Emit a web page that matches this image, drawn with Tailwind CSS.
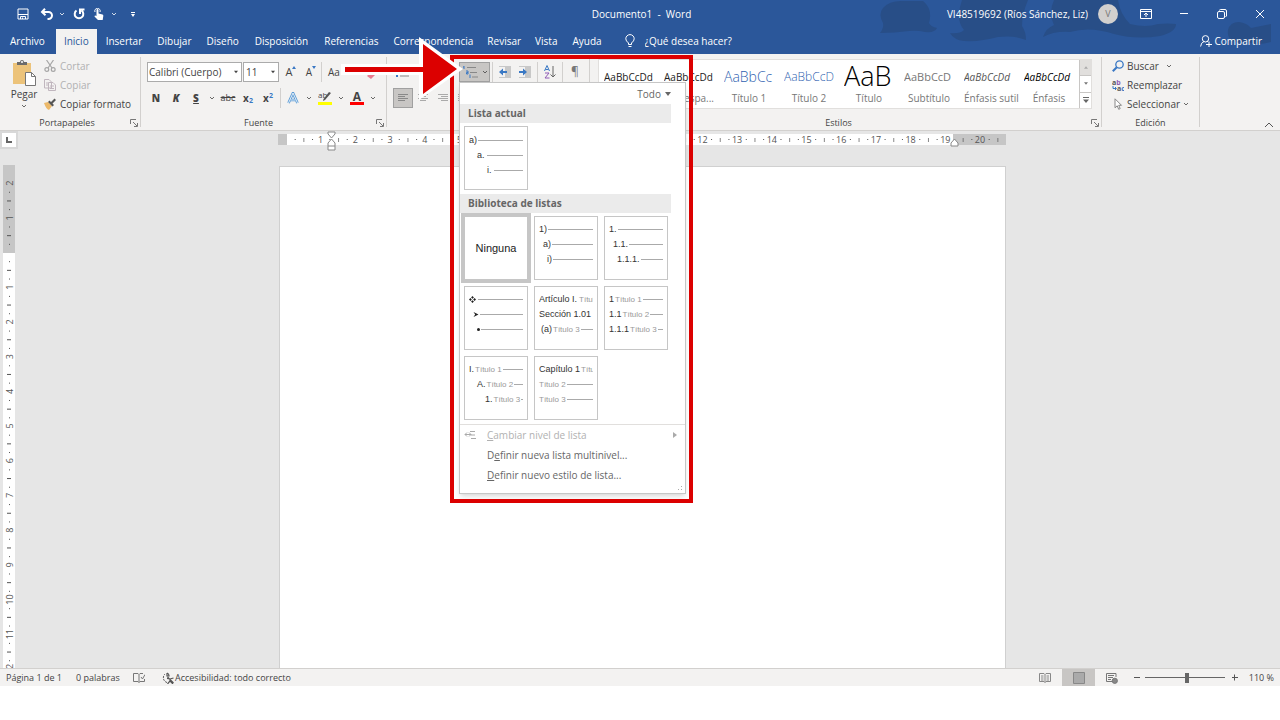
<!DOCTYPE html>
<html lang="es">
<head>
    <meta charset="UTF-8">
    <meta name="viewport" content="width=device-width, initial-scale=1.0">
    <title>Documento1 - Word</title>
    <script src="https://cdn.jsdelivr.net/npm/@tailwindcss/browser@4"></script>
</head>
<body class="bg-white font-['Open_Sans','Noto_Sans',sans-serif] text-[10px] leading-4 text-[#444444]">

<!-- Shared icons -->
<svg class="hidden" xmlns="http://www.w3.org/2000/svg">
    <symbol id="chev" viewBox="0 0 6 4"><path d="M1 1l2 2 2-2" fill="none" stroke="currentColor" stroke-width=".8"/></symbol>
    <symbol id="tri" viewBox="0 0 6 4"><path d="M0 0h6L3 4z" fill="currentColor"/></symbol>
    <symbol id="launcher" viewBox="0 0 8 8"><path d="M.5 5V.5H6M3 3l4 4M7.500 4v3.500H4" fill="none" stroke="#777"/></symbol>
</svg>

<div class="relative min-h-screen flex flex-col overflow-hidden">

    <!-- Title bar and tabs -->
    <header class="relative bg-[#2b579a] text-white">
        <svg class="absolute right-0 top-0 w-[410px] h-[54px]" viewBox="0 0 410 54" fill="#284e87">
            <path d="M10 33q4-5 3-10-5-9 0-15 6-7 18-7h22q10 8 6 22 2 4 8 5-2 5-12 4-8-2-16-1-14 2-29 2z"/>
            <path d="M92 0h66q-6 14-6 26 4 6 4 14-12-5-28-3-18 5-34 4-10-1-14-8 10 1 14-3-5-6-5-14 0-8 3-16z"/>
            <path d="M184 0h64q2 14 12 24 16 4 28 0 10-1 18 0 0 8-16 12-24 4-46-2-24-8-44-2-16-1-27 5 3-9 11-12-6-12 0-25z"/>
            <path d="M358 30q2-8 11-8 8 1 12 6 10-2 20-4v18q-14 4-24 0-10 2-16-2-4-4-3-10z"/>
        </svg>
        <div class="relative h-[27px] flex items-center pl-[15px] pr-3">
            <div class="flex-1 flex items-center">
                <button aria-label="Guardar" class="w-4">
                    <svg class="w-3 h-3 mx-auto" viewBox="0 0 12 12" fill="none" stroke="#fff"><path d="M1 1h10v10H1zM1 6.500h10M3.500 11V8.500h5V11M5.500 9.500V11"/></svg>
                </button>
                <button aria-label="Deshacer" class="ml-2 w-4">
                    <svg class="w-3.5 h-3 mx-auto" viewBox="0 0 14 12" fill="none" stroke="#fff" stroke-width="2"><path d="M5 .8L2 4l3.500 3.200M2 4h6.500a3.500 3.500 0 0 1 0 7H7.500"/></svg>
                </button>
                <svg class="w-1.5 h-1 ml-1"><use href="#chev"/></svg>
                <button aria-label="Rehacer" class="ml-1.5 w-4">
                    <svg class="w-3 h-3 mx-auto" viewBox="0 0 12 12" fill="none" stroke="#fff" stroke-width="2"><path d="M3.500 2.500a4.300 4.300 0 1 0 5 0M7 6V1.500h4.500"/></svg>
                </button>
                <button aria-label="Modo mouse/toque" class="ml-1 w-4">
                    <svg class="w-3 h-3 mx-auto" viewBox="0 0 12 12" fill="#fff"><path d="M3.500 6V2a1 1 0 0 1 2 0v3.500l4 1q1 .3.800 1.500l-.6 4H5L1.500 8.500q0-1.500 2-.5z"/><path d="M2 4a2.700 2.700 0 1 1 5 0" fill="none" stroke="#fff"/></svg>
                </button>
                <svg class="w-1.5 h-1 ml-1"><use href="#chev"/></svg>
                <button aria-label="Personalizar" class="ml-3 w-2">
                    <svg class="w-1 h-1.5 mx-auto" viewBox="0 0 4 6" fill="#fff"><path d="M0 1h4v1H0zM0 3h4L2 6z"/></svg>
                </button>
            </div>
            <div class="whitespace-pre">Documento1  -  Word</div>
            <div class="flex-1 flex items-center justify-end">
                <span>VI48519692 (Ríos Sánchez, Liz)</span>
                <span class="ml-2.5 size-5 rounded-full bg-[#d2d0ce] text-[#777] flex items-center justify-center text-[9px]">V</span>
                <button aria-label="Opciones de presentación" class="ml-[18px] w-5">
                    <svg class="w-3 h-2.5 mx-auto" viewBox="0 0 12 10" fill="none" stroke="#fff"><path d="M.5.500h11v9H.5zM.5 2.500h11M6 8V4M4 6l2-2 2 2"/></svg>
                </button>
                <button aria-label="Minimizar" class="ml-5 w-4"><svg class="w-2.5 h-2.5 mx-auto" viewBox="0 0 10 10" stroke="#fff"><path d="M1 4.500h8"/></svg></button>
                <button aria-label="Restaurar" class="ml-5 w-5"><svg class="w-2.5 h-2.5 mx-auto" viewBox="0 0 10 10" fill="none" stroke="#fff"><rect x=".5" y="2.500" width="7" height="7" rx="1.500"/><path d="M2.500 1.500q0-1 1-1H8q1.500 0 1.500 1.500v5q0 .5-1 .5"/></svg></button>
                <button aria-label="Cerrar" class="ml-5 w-4"><svg class="w-2.5 h-2.5 mx-auto" viewBox="0 0 10 10" stroke="#fff"><path d="M1 1l8 8M9 1L1 9"/></svg></button>
            </div>
        </div>
        <nav class="relative h-[27px] flex items-center pl-0.5">
            <a href="#" class="pl-2 pr-[11px]">Archivo</a>
            <a href="#" class="mt-0.5 px-2 h-[25px] leading-6 bg-[#f3f2f1] text-[#2b579a]">Inicio</a>
            <a href="#" class="pl-[9px] pr-2">Insertar</a>
            <a href="#" class="px-[7px]">Dibujar</a>
            <a href="#" class="px-2">Diseño</a>
            <a href="#" class="px-2">Disposición</a>
            <a href="#" class="px-2">Referencias</a>
            <a href="#" class="px-[7px]">Correspondencia</a>
            <a href="#" class="px-[7px]">Revisar</a>
            <a href="#" class="px-[7px]">Vista</a>
            <a href="#" class="pl-2 pr-[9px]">Ayuda</a>
            <label class="ml-3.5 flex items-center">
                <svg class="w-2.5 h-3.5 mr-2.5" viewBox="0 0 10 14" fill="none" stroke="#fff"><path d="M3.500 10.500V9Q.8 7 .8 4.800a4.200 4.200 0 0 1 8.400 0Q9.200 7 6.500 9v1.500zM3.500 12.500h3"/></svg>
                <input type="text" aria-label="Buscar comandos" placeholder="¿Qué desea hacer?" class="w-28 bg-transparent placeholder:text-white outline-none">
            </label>
            <button class="ml-auto mr-[18px] flex items-center gap-0.5">
                <svg class="w-3 h-3" viewBox="0 0 12 12" fill="none" stroke="#fff"><circle cx="5.500" cy="3.800" r="3.200"/><path d="M.6 11.500q.4-4 3.400-5M8 6.500l-1-.3M6 9.500h6M9 6.500v5.500"/></svg>
                Compartir
            </button>
        </nav>
    </header>

    <!-- Ribbon -->
    <section class="h-[77px] bg-[#f3f2f1] border-b border-[#d2d0ce] flex">

        <!-- Portapapeles -->
        <div class="w-[140px] flex flex-col">
            <div class="flex-1 flex pt-0.5">
                <button class="w-10 ml-1 flex flex-col items-center pt-1 leading-3">
                    <svg class="w-6 h-[26px] mb-0.5" viewBox="0 0 24 26"><rect x="1" y="3" width="18" height="21" fill="#ecc37a"/><path d="M5 5V2h3q0-2 2-2t2 2h3v3z" fill="#6b6b6b"/><circle cx="10" cy="2" r="1" fill="#fff"/><path d="M13.500 12.500h6l4 4v9h-10z" fill="#fff" stroke="#777"/><path d="M19.500 12.500v4h4" fill="none" stroke="#777"/></svg>
                    Pegar
                    <svg class="w-1.5 h-1 mt-1"><use href="#chev"/></svg>
                </button>
                <div class="flex flex-col">
                    <button disabled class="h-[19px] flex items-center gap-1 text-[#b1b1b1]">
                        <svg class="w-3 h-3" viewBox="0 0 12 12" fill="none" stroke="#a6a6a6" stroke-width="1.200"><path d="M2.500 0L8 8M9.500 0L4 8"/><circle cx="2.800" cy="9.500" r="1.900"/><circle cx="9.200" cy="9.500" r="1.900"/></svg>Cortar
                    </button>
                    <button disabled class="h-[19px] flex items-center gap-1 text-[#b1b1b1]">
                        <svg class="w-3 h-3" viewBox="0 0 12 12" fill="#f3f2f1" stroke="#c0b6be"><path d="M.5.500H5L7.500 3v6h-7zM4.500 3.500H9L11.500 6v5.500h-7zM6 7h4M6 9.500h4M2 4h2M2 6h2"/></svg>Copiar
                    </button>
                    <button class="h-[19px] flex items-center gap-1">
                        <svg class="w-3 h-3" viewBox="0 0 12 12"><path d="M0 5l4-1 4 4-3 4q-3-1-5-7z" fill="#ecb96a"/><path d="M4 4l1.500-1.500L7 4l3.500-3.500L12 2 8.500 5.500 10 7 8.500 8.500z" fill="#555"/></svg>Copiar formato
                    </button>
                </div>
            </div>
            <div class="h-3 flex items-center text-[9px] mb-px"><span class="flex-1 pl-1 text-center">Portapapeles</span><button aria-label="Opciones del portapapeles" class="mr-0.5"><svg class="size-2"><use href="#launcher"/></svg></button></div>
        </div>
        <div class="w-px my-[3px] bg-[#d2d0ce]"></div>

        <!-- Fuente -->
        <div class="w-[245px] flex flex-col">
            <div class="flex items-center pl-[6px] pt-2 h-7">
                <div class="relative">
                    <select aria-label="Fuente" class="block appearance-none w-[95px] h-5 bg-white border border-[#ababab] pl-px"><option>Calibri (Cuerpo)</option></select>
                    <svg class="absolute right-1 top-2 w-1 h-1 pointer-events-none"><use href="#tri"/></svg>
                </div>
                <div class="relative ml-px">
                    <select aria-label="Tamaño de fuente" class="block appearance-none w-9 h-5 bg-white border border-[#ababab] pl-0.5"><option>11</option></select>
                    <svg class="absolute right-1 top-2 w-1 h-1 pointer-events-none"><use href="#tri"/></svg>
                </div>
                <button aria-label="Aumentar tamaño" class="ml-0.5 w-5 flex justify-center"><span class="text-[11px]">A</span><svg class="w-1 h-1 mt-px" viewBox="0 0 4 4"><path d="M0 4h4L2 1z" fill="#3a78c4"/></svg></button>
                <button aria-label="Reducir tamaño" class="w-5 flex justify-center"><span>A</span><svg class="w-1 h-1 mt-px" viewBox="0 0 4 4"><path d="M0 1h4L2 4z" fill="#3a78c4"/></svg></button>
                <div class="w-px h-5 bg-[#d2d0ce]"></div>
                <button class="w-6">Aa</button>
                <button aria-label="Borrar formato" class="ml-4 w-4"><svg class="size-4" viewBox="0 0 16 16"><path d="M2 10L7 1l4 8" fill="none" stroke="#555"/><path d="M5 12l4-4 4 3-4 4z" fill="#e87b90"/></svg></button>
            </div>
            <div class="flex-1 flex items-center pl-[5px] pb-1">
                <button class="w-5 font-extrabold">N</button>
                <button class="w-5 font-extrabold italic">K</button>
                <button class="w-5 font-extrabold underline">S</button>
                <button aria-label="Estilo de subrayado" class="w-3"><svg class="w-1.5 h-1 mx-auto"><use href="#chev"/></svg></button>
                <button class="w-5 line-through text-[9px]">abc</button>
                <button class="w-5 font-bold">x<sub class="text-[7px] text-[#3a78c4]">2</sub></button>
                <button class="w-5 font-bold">x<sup class="text-[7px] text-[#3a78c4]">2</sup></button>
                <div class="w-px h-5 bg-[#d2d0ce] mx-0.5"></div>
                <button aria-label="Efectos de texto" class="w-5"><svg class="size-3 mx-auto" viewBox="0 0 12 12" fill="none"><path d="M1.500 11L6 1l4.500 10M3.500 8h5" stroke="#5b9bd5" stroke-width="2.600"/><path d="M1.500 11L6 1l4.500 10M3.500 8h5" stroke="#fff" stroke-width=".8"/></svg></button>
                <button aria-label="Más efectos" class="w-3"><svg class="w-1.5 h-1 mx-auto"><use href="#chev"/></svg></button>
                <button aria-label="Color de resaltado" class="w-5"><svg class="w-3.5 h-3.5 mx-auto" viewBox="0 0 14 14"><text x="0" y="7" font-size="8" fill="#444">ab</text><path d="M13 2L7 9l-2 1 .5-2L11 1z" fill="#555"/><path d="M0 11h14v3H0z" fill="#ffff00"/></svg></button>
                <button aria-label="Más resaltados" class="w-3"><svg class="w-1.5 h-1 mx-auto"><use href="#chev"/></svg></button>
                <button aria-label="Color de fuente" class="w-5"><span class="block w-3.5 mx-auto h-3.5 border-b-[3px] border-[#ff0000] font-bold text-xs leading-[11px]">A</span></button>
                <button aria-label="Más colores" class="w-3"><svg class="w-1.5 h-1 mx-auto"><use href="#chev"/></svg></button>
            </div>
            <div class="h-3 flex items-center text-[9px] mb-px"><span class="flex-1 text-center">Fuente</span><button aria-label="Opciones de fuente" class="mr-0.5"><svg class="size-2"><use href="#launcher"/></svg></button></div>
        </div>
        <div class="w-px my-[3px] bg-[#d2d0ce]"></div>

        <!-- Párrafo -->
        <div class="w-[202px] flex flex-col">
            <div class="flex items-center pt-2 h-7 pl-1.5">
                <button aria-label="Viñetas" class="w-8"><svg class="w-4 h-3" viewBox="0 0 16 12"><path d="M3 1h2v2H3zM3 5h2v2H3zM3 9h2v2H3z" fill="#3a78c4"/><path d="M7 2h9M7 6h9M7 10h9" stroke="#888"/></svg></button>
                <button aria-label="Numeración" class="w-[34px]"></button>
                <div class="relative">
                    <button aria-label="Lista multinivel" aria-expanded="true" class="w-[31px] h-5 bg-[#c8c6c4] border border-[#a0a0a0] flex items-center justify-center gap-1">
                        <svg class="w-4 h-3" viewBox="0 0 16 12"><path d="M2 0v3M1 1h1M4 5h2v3H4.500V6.500H6M8 8.500V12" fill="none" stroke="#3a78c4"/><path d="M5 1.500h9M8 6.500h7M10 11h6" stroke="#888"/></svg>
                        <svg class="w-1.5 h-1"><use href="#chev"/></svg>
                    </button>

                    <!-- Multilevel list menu -->
                    <div class="absolute z-10 left-0 top-5 w-[227px] bg-white border border-[#c6c6c6] shadow-md text-[#666]">
                        <button class="flex items-center gap-1 ml-auto mr-3.5 h-[21px]">Todo <svg class="w-1.5 h-1"><use href="#tri"/></svg></button>
                        <h3 class="w-[211px] h-[19px] leading-[19px] bg-[#ebebeb] pl-2 font-bold">Lista actual</h3>
                        <div class="p-1 pt-[3px] font-['Liberation_Sans',Arial,sans-serif] text-[9px] text-[#333]">
                            <button class="block size-16 border border-[#c6c6c6] text-left leading-[15px] px-1 pb-1.5">
                                <span class="flex items-center gap-px">a)<i class="flex-1 h-px bg-[#aaa]"></i></span>
                                <span class="flex items-center gap-0.5 pl-2">a.<i class="flex-1 h-px bg-[#aaa]"></i></span>
                                <span class="flex items-center gap-0.5 pl-[18px]">i.<i class="flex-1 h-px bg-[#aaa]"></i></span>
                            </button>
                        </div>
                        <h3 class="w-[211px] h-[19px] leading-[19px] bg-[#ebebeb] pl-2 font-bold">Biblioteca de listas</h3>
                        <div class="p-1 pt-[3px] grid grid-cols-[64px_64px_64px] gap-1.5 font-['Liberation_Sans',Arial,sans-serif] text-[9px] text-[#333]">
                            <button class="size-16 border border-[#c6c6c6] outline-3 outline-[#c6c6c6] text-[11px] text-[#222]">Ninguna</button>
                            <button class="size-16 border border-[#c6c6c6] text-left leading-[15px] px-1 pb-2">
                                <span class="flex items-center gap-px">1)<i class="flex-1 h-px bg-[#aaa]"></i></span>
                                <span class="flex items-center gap-px pl-1">a)<i class="flex-1 h-px bg-[#aaa]"></i></span>
                                <span class="flex items-center gap-px pl-2">i)<i class="flex-1 h-px bg-[#aaa]"></i></span>
                            </button>
                            <button class="size-16 border border-[#c6c6c6] text-left leading-[15px] px-1 pb-2">
                                <span class="flex items-center gap-px">1.<i class="flex-1 h-px bg-[#aaa]"></i></span>
                                <span class="flex items-center gap-px pl-1">1.1.<i class="flex-1 h-px bg-[#aaa]"></i></span>
                                <span class="flex items-center gap-px pl-2">1.1.1.<i class="flex-1 h-px bg-[#aaa]"></i></span>
                            </button>
                            <button class="size-16 border border-[#c6c6c6] text-left leading-[15px] px-1 pb-2">
                                <span class="flex items-center gap-0.5 h-[15px]"><svg class="size-[7px]" viewBox="0 0 8 8" fill="#222"><path d="M4 0l1.600 1.600L4 3.200 2.400 1.600zM4 4.800l1.600 1.600L4 8 2.400 6.400zM1.600 2.400L3.200 4 1.600 5.600 0 4zM6.400 2.400L8 4 6.400 5.600 4.800 4z"/></svg><i class="flex-1 h-px bg-[#aaa]"></i></span>
                                <span class="flex items-center gap-px h-[15px] pl-1"><svg class="w-1.5 h-[5px]" viewBox="0 0 6 6" fill="#222"><path d="M0 0l6 3-6 3 2-3z"/></svg><i class="flex-1 h-px bg-[#aaa]"></i></span>
                                <span class="flex items-center gap-px h-[15px] pl-2"><b class="size-[3px] rounded-full bg-[#222]"></b><i class="flex-1 h-px bg-[#aaa]"></i></span>
                            </button>
                            <button class="size-16 border border-[#c6c6c6] text-left leading-[15px] px-1 pb-2 whitespace-nowrap">
                                <span class="flex items-center gap-0.5 overflow-hidden">Artículo I. <em class="not-italic text-[8px] text-[#999]">Título 1</em></span>
                                <span class="flex items-center gap-0.5 overflow-hidden">Sección 1.01 <em class="not-italic text-[8px] text-[#999]">Título 2</em></span>
                                <span class="flex items-center gap-px pl-0.5">(a)<em class="not-italic text-[8px] text-[#999]">Título 3</em><i class="flex-1 h-px bg-[#aaa]"></i></span>
                            </button>
                            <button class="size-16 border border-[#c6c6c6] text-left leading-[15px] px-1 pb-2 whitespace-nowrap">
                                <span class="flex items-center gap-px">1<em class="not-italic text-[8px] text-[#999]">Título 1</em><i class="flex-1 h-px bg-[#aaa]"></i></span>
                                <span class="flex items-center gap-px">1.1<em class="not-italic text-[8px] text-[#999]">Título 2</em><i class="flex-1 h-px bg-[#aaa]"></i></span>
                                <span class="flex items-center gap-px">1.1.1<em class="not-italic text-[8px] text-[#999]">Título 3</em><i class="flex-1 h-px bg-[#aaa]"></i></span>
                            </button>
                            <button class="size-16 border border-[#c6c6c6] text-left leading-[15px] px-1 pb-2 whitespace-nowrap">
                                <span class="flex items-center gap-px">I. <em class="not-italic text-[8px] text-[#999]">Título 1</em><i class="flex-1 h-px bg-[#aaa]"></i></span>
                                <span class="flex items-center gap-px pl-2">A. <em class="not-italic text-[8px] text-[#999]">Título 2</em><i class="flex-1 h-px bg-[#aaa]"></i></span>
                                <span class="flex items-center gap-px pl-4">1. <em class="not-italic text-[8px] text-[#999]">Título 3</em><i class="flex-1 h-px bg-[#aaa]"></i></span>
                            </button>
                            <button class="size-16 border border-[#c6c6c6] text-left leading-[15px] px-1 pb-2 whitespace-nowrap">
                                <span class="flex items-center gap-px overflow-hidden">Capítulo 1<em class="not-italic text-[8px] text-[#999]">Título 1</em></span>
                                <span class="flex items-center gap-px"><em class="not-italic text-[8px] text-[#999]">Título 2</em><i class="flex-1 h-px bg-[#aaa]"></i></span>
                                <span class="flex items-center gap-px"><em class="not-italic text-[8px] text-[#999]">Título 3</em><i class="flex-1 h-px bg-[#aaa]"></i></span>
                            </button>
                        </div>
                        <div class="border-t border-[#e1dfdd] leading-5">
                            <button disabled class="w-full h-5 flex items-center pl-1 pr-2 text-[#b1b1b1]">
                                <svg class="w-3 h-2 mr-[11px]" viewBox="0 0 12 8" fill="none" stroke="#aaa"><path d="M6 .5h5M7 4h4M7 7.500h5M1 3.500h6M3 1.500l-2 2 2 2M5 1.500l2 2-2 2"/></svg>
                                <span><u>C</u>ambiar nivel de lista</span>
                                <svg class="w-1 h-1.5 ml-auto" viewBox="0 0 4 6"><path d="M0 0l4 3-4 3z" fill="#aaa"/></svg>
                            </button>
                            <button class="block h-5 pl-[27px]">D<u>e</u>finir nueva lista multinivel...</button>
                            <button class="block h-5 pl-[27px]"><u>D</u>efinir nuevo estilo de lista...</button>
                            <svg class="ml-auto mr-0.5 w-1.5 h-2" viewBox="0 0 6 8" fill="#aaa"><path d="M4 1h1v1H4zM4 4h1v1H4zM1 4h1v1H1z"/></svg>
                        </div>
                    </div>
                </div>
                <div class="w-px h-5 bg-[#d2d0ce] mx-0.5"></div>
                <button aria-label="Disminuir sangría" class="w-5"><svg class="w-3 h-3 mx-auto" viewBox="0 0 12 12"><path d="M6 0h6v12H6zM0 0h6v1H0zM0 11h6v1H0z" fill="#c8c8c8"/><path d="M0 6l4-3.500V5h4v2H4v2.500z" fill="#3a78c4"/></svg></button>
                <button aria-label="Aumentar sangría" class="w-5"><svg class="w-3 h-3 mx-auto" viewBox="0 0 12 12"><path d="M6 0h6v12H6zM0 0h6v1H0zM0 11h6v1H0z" fill="#c8c8c8"/><path d="M8 6L4 2.500V5H0v2h4v2.500z" fill="#3a78c4"/></svg></button>
                <div class="w-px h-5 bg-[#d2d0ce] mx-0.5"></div>
                <button aria-label="Ordenar" class="w-5"><svg class="w-3 h-3.5 mx-auto" viewBox="0 0 12 14" fill="none"><path d="M.5 6L3 .5 5.500 6M1.500 4.500h3" stroke="#3a78c4"/><path d="M1 8h4l-4 5h4.500" stroke="#8e5bb5"/><path d="M9 1v11M6.500 9.500L9 12l2.500-2.500" stroke="#666"/></svg></button>
                <div class="w-px h-5 bg-[#d2d0ce] mx-0.5"></div>
                <button class="w-5 text-xs text-[#777]">¶</button>
            </div>
            <div class="flex-1 flex items-center pl-1.5 pb-1">
                <button aria-label="Alinear a la izquierda" class="size-5 bg-[#c8c6c4] border border-[#a0a0a0]"><svg class="w-2.5 h-2.5 mx-auto" viewBox="0 0 10 10" stroke="#888"><path d="M0 1.500h10M0 3.500h7M0 5.500h10M0 7.500h7"/></svg></button>
                <button aria-label="Centrar" class="w-5"><svg class="w-2.5 h-2.5 mx-auto" viewBox="0 0 10 10" stroke="#aaa"><path d="M0 1.500h10M2 3.500h6M0 5.500h10M2 7.500h6"/></svg></button>
                <button aria-label="Alinear a la derecha" class="w-5"><svg class="w-2.5 h-2.5 mx-auto" viewBox="0 0 10 10" stroke="#aaa"><path d="M0 1.500h10M3 3.500h7M0 5.500h10M3 7.500h7"/></svg></button>
                <button aria-label="Justificar" class="w-5"><svg class="w-2.5 h-2.5 mx-auto" viewBox="0 0 10 10" stroke="#aaa"><path d="M0 1.500h10M0 3.500h10M0 5.500h10M0 7.500h10"/></svg></button>
            </div>
            <div class="h-3"></div>
        </div>
        <div class="w-px my-[3px] bg-[#d2d0ce]"></div>

        <!-- Estilos -->
        <div class="w-[511px] pl-2 flex flex-col">
            <div class="flex-1 flex pt-[5px] pb-2">
                <div class="flex items-stretch bg-white border border-[#e1dfdd] text-[#777] overflow-hidden">
                    <button aria-label="Normal" class="w-[60px] px-[5px] pb-4 whitespace-nowrap"><span class="flex items-center h-7 pt-0.5 overflow-hidden text-[#222]">AaBbCcDd</span></button>
                    <button class="w-[60px] px-[5px] whitespace-nowrap"><span class="flex items-center h-7 pt-0.5 overflow-hidden text-[#222]">AaBbCcDd</span><span class="block text-right">espa...</span></button>
                    <button class="w-[60px] px-[5px] whitespace-nowrap"><span class="flex items-center h-7 pt-0.5 overflow-hidden text-sm font-light text-[#2f5fb0]">AaBbCc</span>Título 1</button>
                    <button class="w-[60px] px-[5px] whitespace-nowrap"><span class="flex items-center h-7 pt-0.5 overflow-hidden text-xs font-light text-[#2f5fb0]">AaBbCcD</span>Título 2</button>
                    <button class="w-[60px] px-[5px] whitespace-nowrap"><span class="flex items-center h-7 overflow-hidden text-[27px] font-light text-black">AaB</span>Título</button>
                    <button class="w-[60px] px-[5px] whitespace-nowrap"><span class="flex items-center h-7 pt-0.5 overflow-hidden text-[11px] text-[#777]">AaBbCcD</span>Subtítulo</button>
                    <button class="w-[60px] px-[5px] whitespace-nowrap"><span class="flex items-center h-7 pt-0.5 overflow-hidden italic text-[#555]">AaBbCcDd</span>Énfasis sutil</button>
                    <button class="w-[60px] px-[5px] whitespace-nowrap"><span class="flex items-center h-7 pt-0.5 overflow-hidden italic text-black">AaBbCcDd</span>Énfasis</button>
                    <div class="w-3 flex flex-col border-l border-[#c8c6c4]">
                        <button aria-label="Fila anterior" class="flex-1 bg-[#e1dfdd]"><svg class="w-1 h-[3px] mx-auto text-[#aaa] rotate-180"><use href="#tri"/></svg></button>
                        <button aria-label="Fila siguiente" class="flex-1 border-y border-[#c8c6c4]"><svg class="w-1 h-[3px] mx-auto"><use href="#tri"/></svg></button>
                        <button aria-label="Más estilos" class="flex-1"><svg class="w-1.5 h-1.5 mx-auto" viewBox="0 0 6 6" fill="#666"><path d="M0 0h6v1H0zM0 2.500h6L3 6z"/></svg></button>
                    </div>
                </div>
            </div>
            <div class="h-3 flex items-center text-[9px] mb-px"><span class="flex-1 pr-3 text-center">Estilos</span><button aria-label="Opciones de estilos" class="mr-0.5"><svg class="size-2"><use href="#launcher"/></svg></button></div>
        </div>
        <div class="w-px my-[3px] bg-[#d2d0ce]"></div>

        <!-- Edición -->
        <div class="w-[97px] flex flex-col">
            <div class="flex-1 flex flex-col pt-0.5 pl-2.5">
                <button class="h-[19px] flex items-center gap-[3px]">
                    <svg class="w-3 h-3" viewBox="0 0 12 12" fill="none" stroke="#3a78c4"><circle cx="7.500" cy="4.500" r="3.700" stroke-width="1.300"/><path d="M4.800 7.200L.8 11.200" stroke-width="2"/></svg>Buscar
                    <svg class="w-1.5 h-1 ml-1"><use href="#chev"/></svg>
                </button>
                <button class="h-[19px] flex items-center gap-[3px]">
                    <svg class="w-3 h-3" viewBox="0 0 12 12"><text x="0" y="6" font-size="7" font-weight="700" fill="#555">a<tspan fill="#8e5bb5">b</tspan></text><text x="5" y="12" font-size="7" font-weight="700" fill="#555">a<tspan fill="#3a78c4">c</tspan></text><path d="M1 7v2.500h3M3 8l1.500 1.500L3 11" fill="none" stroke="#3a78c4"/></svg>Reemplazar
                </button>
                <button class="h-[19px] flex items-center gap-[3px]">
                    <svg class="w-3 h-3" viewBox="0 0 12 12" fill="#fff" stroke="#888"><path d="M3 .8v9l2.200-2 1.500 3.500 1.500-.7-1.500-3.300H9.500z"/></svg>Seleccionar
                    <svg class="w-1.5 h-1"><use href="#chev"/></svg>
                </button>
            </div>
            <div class="h-3 flex items-center justify-center text-[9px] mb-px">Edición</div>
        </div>
        <div class="w-px my-[3px] bg-[#d2d0ce]"></div>
        <button aria-label="Contraer la cinta" class="ml-auto mr-1.5 mb-0.5 self-end"><svg class="w-2.5 h-1.5" viewBox="0 0 10 6" fill="none" stroke="#555"><path d="M1 5l4-4 4 4"/></svg></button>
    </section>

    <!-- Document area -->
    <main class="h-[537px] bg-[#e6e6e6] grid grid-cols-[1fr_728px_1fr] pl-1 overflow-hidden">
        <div class="flex flex-col">
            <button aria-label="Tabulación" class="size-3.5 mt-0.5 -ml-0.5 bg-white outline-2 outline-[#d8d8d8] flex items-center justify-center"><svg class="w-1.5 h-1.5" viewBox="0 0 6 6"><path d="M1 0v5h5" fill="none" stroke="#666" stroke-width="2"/></svg></button>
            <svg id="vruler" class="mt-[18px] -ml-px w-3 h-[503px]" viewBox="0 0 12 503" fill="#555" font-size="9"><rect width="12" height="503" fill="#fff"/><rect width="12" height="88" fill="#c6c6c6"/></svg>
        </div>
        <div class="flex flex-col">
            <svg id="hruler" class="h-5 w-full" viewBox="0 0 728 20" fill="#555" font-size="9"><rect y="3" width="728" height="11" fill="#fff"/><rect y="3" width="9" height="11" fill="#c6c6c6"/><rect x="675" y="3" width="53" height="11" fill="#c6c6c6"/></svg>
            <article class="mt-[15px] ml-px flex-1 bg-white border border-b-0 border-[#d0d0d0]"></article>
        </div>
        <div></div>
    </main>

    <!-- Status bar -->
    <footer class="h-[18px] bg-[#f3f2f1] border-t border-[#d2d0ce] flex items-center text-[9px] pl-1.5 pr-1.5">
        <span class="w-[70px]">Página 1 de 1</span>
        <span class="w-[57px]">0 palabras</span>
        <button aria-label="Revisión" class="w-[29px]"><svg class="w-3 h-2.5" viewBox="0 0 12 10" fill="none" stroke="#777"><path d="M6 9.500V1.500L5 .5H.5v8H5l1 1 1-1h4.500V6M6 1.500l1-1h3M8 4l1.500 2L12 1.500"/></svg></button>
        <button class="flex items-center gap-px">
            <svg class="w-3 h-3" viewBox="0 0 12 12" fill="none" stroke="#555"><path d="M5 10.500A5 5 0 0 1 3 2" stroke-dasharray="2 1"/><path d="M5 1v3h2a3 3 0 0 0-2-3M5 6.500l3 .5 3.500-1M8 7v2l-2.500 3M8 9l3 3M5.500 5l6 6" stroke-width="1.200"/></svg>
            Accesibilidad: todo correcto
        </button>
        <div class="ml-auto flex items-center h-full">
            <button aria-label="Modo de lectura" class="w-[34px]"><svg class="w-3 h-2.5 mx-auto" viewBox="0 0 12 10" fill="none" stroke="#888"><path d="M6 1.500v8M.5.500H5l1 1 1-1h4.500v8H7l-1 1-1-1H.5zM2 3h2.500M2 5h2.500M2 7h2.500M7.500 3H10M7.500 5H10M7.500 7H10"/></svg></button>
            <button aria-label="Diseño de impresión" class="w-[33px] h-full bg-[#c8c6c4]"><svg class="w-3 h-3 mx-auto" viewBox="0 0 12 12" fill="#aaa" stroke="#888"><path d="M.5.500h11v11H.5z"/></svg></button>
            <button aria-label="Diseño web" class="w-[34px]"><svg class="w-3 h-3 mx-auto" viewBox="0 0 12 12" fill="none" stroke="#777"><path d="M6 9.500H.5v-8h9.500V5M2 3.500h6M2 5.500h5M2 7.500h3"/><circle cx="8.800" cy="8.800" r="2.600" fill="#888"/></svg></button>
            <button aria-label="Alejar" class="w-4"><svg class="w-2 h-2 mx-auto" viewBox="0 0 8 8" stroke="#555"><path d="M1 3.500h6"/></svg></button>
            <input type="range" aria-label="Zoom" min="0" max="100" value="53" class="appearance-none w-20 h-2.5 bg-transparent [&::-webkit-slider-runnable-track]:h-px [&::-webkit-slider-runnable-track]:bg-[#666] [&::-webkit-slider-thumb]:appearance-none [&::-webkit-slider-thumb]:w-1 [&::-webkit-slider-thumb]:h-2.5 [&::-webkit-slider-thumb]:-mt-1 [&::-webkit-slider-thumb]:bg-[#666]">
            <button aria-label="Acercar" class="w-5"><svg class="w-2 h-2 mx-auto" viewBox="0 0 8 8" stroke="#555"><path d="M1 3.500h6M3.500.500v6"/></svg></button>
            <span class="w-[29px] text-right">110 %</span>
        </div>
    </footer>

    <!-- Callout: red frame and arrow -->
    <div class="absolute z-20 left-[450px] top-[55px] w-[243px] h-[448px] border-4 border-[#dc0000] pointer-events-none"></div>
    <svg class="absolute z-20 left-[340px] top-[34px] w-[124px] h-[70px] pointer-events-none" viewBox="0 0 124 70">
        <path d="M1 30h78V3l44 32-44 31V41H1z" fill="#fff"/>
        <path d="M5 33h78V10l34 25-34 25V38H5z" fill="#dc0000"/>
    </svg>
</div>

<script>
    const SVG = 'http://www.w3.org/2000/svg';
    const CM = 34.7;

    function add(parent, tag, attrs, text) {
        const el = document.createElementNS(SVG, tag);
        for (const key in attrs) el.setAttribute(key, attrs[key]);
        if (text) el.textContent = text;
        parent.appendChild(el);
    }

    // Horizontal ruler
    const h = document.getElementById('hruler');
    for (let i = 0; i <= 20; i++) {
        const x = 8 + i * CM;
        if (i > 0) add(h, 'text', { x: x, y: 12, 'text-anchor': 'middle' }, String(i));
        add(h, 'rect', { x: x + CM / 4, y: 8, width: 1, height: 1 });
        add(h, 'rect', { x: x + CM / 2, y: 7, width: 1, height: 4, opacity: 0.7 });
        if (i < 20) add(h, 'rect', { x: x + CM * 3 / 4, y: 8, width: 1, height: 1 });
    }
    add(h, 'path', { d: 'M50 1h7v2l-3.500 4L50 3zM50 12l3.500-4 3.500 4v7h-7zM50 15h7', fill: '#fff', stroke: '#888' });
    add(h, 'path', { d: 'M673 15v-3l3.500-4 3.500 4v3z', fill: '#fff', stroke: '#888' });

    // Vertical ruler
    const v = document.getElementById('vruler');
    for (let i = -2; i <= 12; i++) {
        const y = 87.500 + i * CM;
        if (i !== 0) add(v, 'text', { transform: `translate(10 ${y}) rotate(-90)`, 'text-anchor': 'middle' }, String(Math.abs(i)));
        add(v, 'rect', { x: 6, y: y + CM / 4, width: 1, height: 1 });
        add(v, 'rect', { x: 4, y: y + CM / 2, width: 4, height: 1 });
        add(v, 'rect', { x: 6, y: y + CM * 3 / 4, width: 1, height: 1 });
    }
</script>
</body>
</html>
